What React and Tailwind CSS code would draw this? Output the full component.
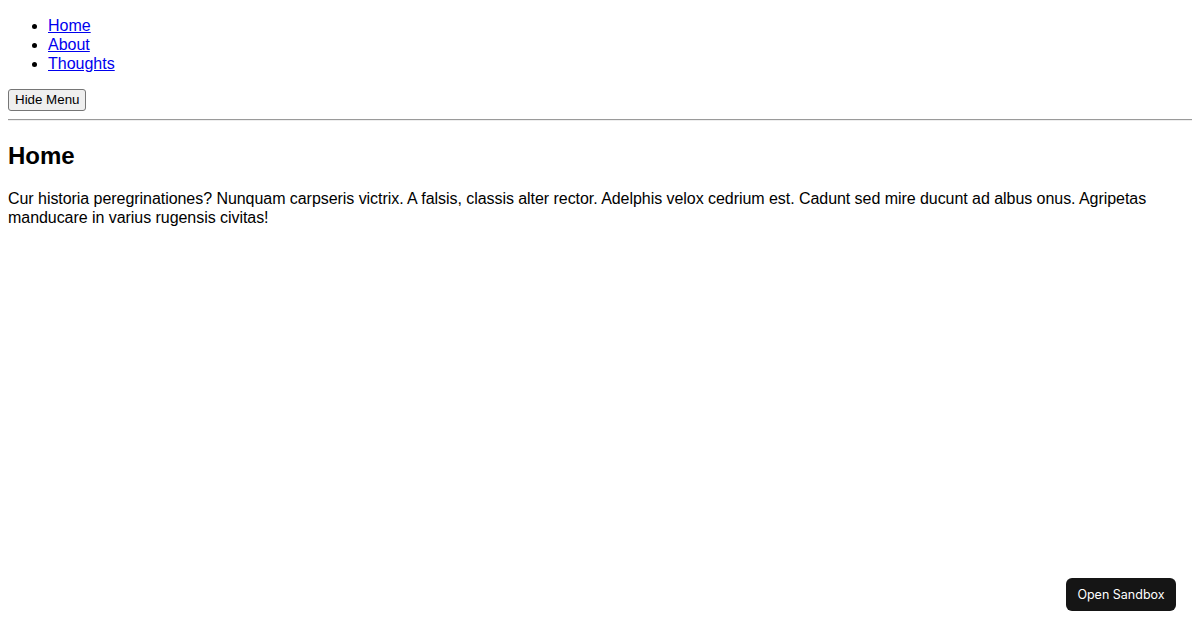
export default function App() {
  return (
    <div className="min-h-[630px] bg-white px-2 pb-2 font-['Liberation_Sans',Arial,sans-serif] text-[16px] leading-[19px] text-black">
      <ul className="mb-4 list-disc pl-10 pt-4">
        <li>
          <a href="#" className="text-[#0000ee] underline">Home</a>
        </li>
        <li>
          <a href="#" className="text-[#0000ee] underline">About</a>
        </li>
        <li>
          <a href="#" className="text-[#0000ee] underline">Thoughts</a>
        </li>
      </ul>
      <button className="h-[22px] rounded-[3px] border border-[#767676] bg-[#efefef] px-[6px] text-[13.33px] leading-[16px] text-black">
        Hide Menu
      </button>
      <hr className="mt-2 border-t border-b border-t-[#9a9a9a] border-b-[#eeeeee]" />
      <h2 className="mb-[19.92px] mt-[20.5px] text-[24px] font-bold leading-[28px]">Home</h2>
      <p className="my-4 tracking-[-0.05px]">
        Cur historia peregrinationes? Nunquam carpseris victrix. A falsis, classis alter rector. Adelphis velox cedrium est.
        Cadunt sed mire ducunt ad albus onus. Agripetas manducare in varius rugensis civitas!
      </p>
      <button className="fixed bottom-[19px] right-[24px] h-[33px] w-[110px] rounded-md bg-[#151515] font-['Inter',sans-serif] text-[12.5px] text-white">
        Open Sandbox
      </button>
    </div>
  );
}
